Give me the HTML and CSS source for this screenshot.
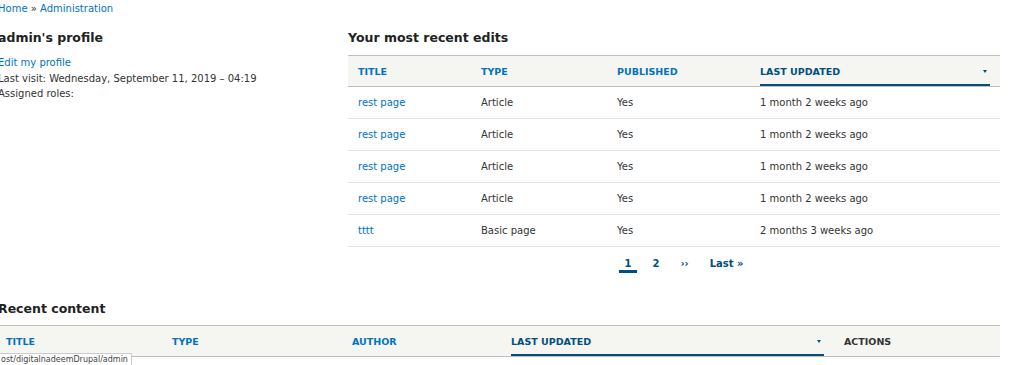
FILE: index.html
```html
<!DOCTYPE html>
<html>
<head>
<meta charset="utf-8">
<link rel="stylesheet" href="styles.css">
</head>
<body>
<div class="page">
  <div class="breadcrumb"><a href="#">Home</a> » <a href="#">Administration</a></div>
  <div class="top">
    <div class="profile">
      <h2 class="heading">admin's profile</h2>
      <div class="line"><a href="#">Edit my profile</a></div>
      <div class="line">Last visit: Wednesday, September 11, 2019 – 04:19</div>
      <div class="line">Assigned roles:</div>
    </div>
    <div class="edits">
      <h2 class="heading">Your most recent edits</h2>
      <table class="tbl t1">
        <thead>
          <tr>
            <th class="c1">Title</th>
            <th class="c2">Type</th>
            <th class="c3">Published</th>
            <th class="c4 active"><span class="act">Last updated<span class="arrow"></span></span></th>
          </tr>
        </thead>
        <tbody>
          <tr><td><a href="#">rest page</a></td><td>Article</td><td>Yes</td><td>1 month 2 weeks ago</td></tr>
          <tr><td><a href="#">rest page</a></td><td>Article</td><td>Yes</td><td>1 month 2 weeks ago</td></tr>
          <tr><td><a href="#">rest page</a></td><td>Article</td><td>Yes</td><td>1 month 2 weeks ago</td></tr>
          <tr><td><a href="#">rest page</a></td><td>Article</td><td>Yes</td><td>1 month 2 weeks ago</td></tr>
          <tr><td><a href="#">tttt</a></td><td>Basic page</td><td>Yes</td><td>2 months 3 weeks ago</td></tr>
        </tbody>
      </table>
      <div class="pager">
        <span class="pg current">1</span>
        <a class="pg" href="#">2</a>
        <a class="pg" href="#">››</a>
        <a class="pg" href="#">Last »</a>
      </div>
    </div>
  </div>
  <h2 class="heading recent">Recent content</h2>
  <table class="tbl t2">
    <thead>
      <tr>
        <th class="d1">Title</th>
        <th class="d2">Type</th>
        <th class="d3">Author</th>
        <th class="d4 active"><span class="act">Last updated<span class="arrow"></span></span></th>
        <th class="d5 plain">Actions</th>
      </tr>
    </thead>
  </table>
</div>
<div class="status">ost/digitalnadeemDrupal/admin</div>
</body>
</html>
```
FILE: styles.css
```css
html, body {
  margin: 0;
  padding: 0;
  background: #fff;
}
body {
  font-family: "DejaVu Sans", Verdana, sans-serif;
  font-size: 10px;
  color: #333;
  overflow: hidden;
  height: 365px;
}
a {
  color: #0074bd;
  text-decoration: none;
}
.page {
  margin-left: -2px;
  width: 1002px;
}
.breadcrumb {
  height: 18px;
  line-height: 18px;
  font-size: 10px;
}
.top {
  display: grid;
  grid-template-columns: 350px 652px;
}
.heading {
  margin: 0;
  font-size: 12.5px;
  font-weight: bold;
  color: #222;
  height: 37px;
  line-height: 39px;
}
.line {
  line-height: 15.5px;
}
.tbl {
  border-collapse: collapse;
  width: 652px;
  table-layout: fixed;
}
.tbl th {
  background: #f5f5f2;
  border-top: 1px solid #bfbfba;
  border-bottom: 1px solid #bfbfba;
  height: 30px;
  padding: 0 10px;
  text-align: left;
  text-transform: uppercase;
  font-size: 9.5px;
  font-weight: bold;
  color: #0074bd;
}
.tbl th.active {
  color: #004f80;
}
.tbl th.plain {
  color: #333;
}
.act {
  display: flex;
  align-items: center;
  justify-content: space-between;
  height: 30px;
  border-bottom: 2px solid #004f80;
  box-sizing: border-box;
  padding-top: 2px;
}
.arrow {
  width: 0;
  height: 0;
  border-left: 2.5px solid transparent;
  border-right: 2.5px solid transparent;
  border-top: 3px solid #004f80;
  margin-right: 3px;
}
.tbl td {
  height: 31px;
  padding: 0 10px;
  border-bottom: 1px solid #e6e4df;
  font-size: 10px;
}
.c1 { width: 103px; }
.c2 { width: 116px; }
.c3 { width: 123px; }
.pager {
  display: flex;
  justify-content: center;
  gap: 9px;
  padding-top: 8px;
  padding-left: 20px;
}
.pg {
  font-weight: bold;
  font-size: 10px;
  color: #004f80;
  padding: 0 6px;
  height: 18px;
  line-height: 17px;
}
.pg.current {
  position: relative;
}
.pg.current::after {
  content: "";
  position: absolute;
  left: 0;
  right: 0;
  bottom: 0;
  height: 3px;
  background: #004f80;
}
.recent {
  margin-top: 19px;
  height: 33px;
  line-height: 34px;
}
.t2 {
  width: 1004px;
  margin-left: -2px;
}
.d1 { width: 146px; }
.d2 { width: 160px; }
.d3 { width: 139px; }
.d4 { width: 313px; }
.status {
  position: absolute;
  left: -1px;
  top: 353px;
  height: 12px;
  line-height: 12px;
  padding: 0 3px 0 1px;
  background: #fff;
  border: 1px solid #ccc;
  border-bottom: none;
  font-size: 8px;
  color: #444;
}
```
